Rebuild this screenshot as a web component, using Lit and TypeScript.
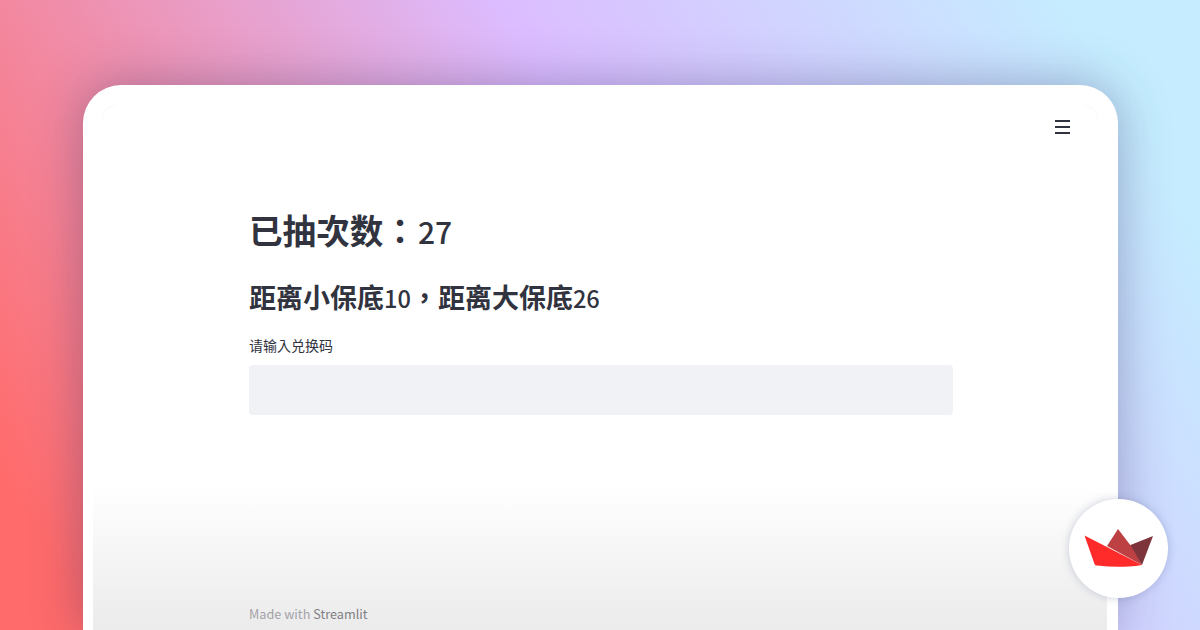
import { LitElement, css, html } from "lit";
import { customElement } from "lit/decorators.js";

@customElement("app-root")
export class AppRoot extends LitElement {
  static styles = css`
    :host {
      display: block;
      width: 1200px;
      height: 630px;
      overflow: hidden;
      position: relative;
      font-family: "Noto Sans CJK TC", "Noto Sans", sans-serif;
      color: #262730;
      background: linear-gradient(60deg, #ff6b6b 6%, #dcbcff 55%, #c5edff 92%);
    }
    .stage {
      height: 100%;
      box-sizing: border-box;
      padding: 85px 82px 0 83px;
    }
    .card {
      height: 100%;
      background: #fff;
      border-radius: 38px 38px 0 0;
      box-shadow: 0 0 50px rgba(40, 40, 90, 0.35);
      padding: 0 11px 0 10px;
      display: flex;
    }
    .frame {
      flex: 1;
      position: relative;
      padding: 0 154px 0 156px;
      background: linear-gradient(180deg, rgba(235, 235, 236, 0) 400px, #ebebec 545px);
      display: flex;
      flex-direction: column;
    }
    .frame::before,
    .frame::after {
      content: "";
      position: absolute;
      top: 20px;
      width: 14px;
      height: 14px;
      border-top: 1px solid #f9f9f9;
    }
    .frame::before {
      left: 9px;
      border-left: 1px solid #f9f9f9;
      border-top-left-radius: 14px;
    }
    .frame::after {
      right: 9px;
      border-right: 1px solid #f9f9f9;
      border-top-right-radius: 14px;
    }
    .menu {
      position: absolute;
      top: 35px;
      right: 37px;
      width: 15px;
      display: flex;
      flex-direction: column;
      gap: 4px;
    }
    .menu span {
      height: 2px;
      background: #31333f;
    }
    h1 {
      margin: 117px 0 0;
      font-size: 33.6px;
      line-height: 56px;
      font-weight: 700;
      color: #31333f;
    }
    h1 .num {
      margin-left: 1px;
      font-size: 30px;
      font-weight: 500;
    }
    h2 {
      margin: 16px 0 0;
      font-size: 27px;
      line-height: 44px;
      font-weight: 700;
      color: #31333f;
    }
    h2 .num {
      font-size: 23.6px;
      font-weight: 500;
    }
    label {
      display: block;
      margin-top: 15px;
      font-size: 14px;
      line-height: 20px;
      color: #31333f;
    }
    .input {
      margin-top: 10px;
      height: 50px;
      background: #f0f2f6;
      border-radius: 4px;
    }
    .foot {
      margin-top: auto;
      padding-bottom: 6px;
      font-size: 12.7px;
      line-height: 20px;
      color: #a3a3a8;
    }
    .foot b {
      font-weight: 400;
      color: #808085;
    }
    .badge {
      position: absolute;
      left: 1069px;
      top: 499px;
      width: 99px;
      height: 99px;
      border-radius: 50%;
      background: #fff;
      box-shadow: 0 0 8px rgba(60, 70, 120, 0.25);
      display: flex;
      align-items: center;
      justify-content: center;
    }
  `;

  render() {
    return html`
      <div class="stage">
        <div class="card">
          <div class="frame">
            <div class="menu"><span></span><span></span><span></span></div>
            <h1>已抽次数：<span class="num">27</span></h1>
            <h2>距离小保底<span class="num">10</span>，距离大保底<span class="num">26</span></h2>
            <label>请输入兑换码</label>
            <div class="input"></div>
            <div class="foot">Made with <b>Streamlit</b></div>
          </div>
        </div>
      </div>
      <div class="badge">
        <svg width="70" height="39" viewBox="0 0 70 39">
          <path d="M44 17 L69 7 L58 36 Z" fill="#7d353b" />
          <path d="M23 17 L34 0 L47 17 L58 36 Z" fill="#bd4043" />
          <path d="M0.5 6.5 L58 36 Q52 37 45 37.5 Q30 38.5 13 36.5 Q11 36.5 10.5 35 Z" fill="#ff2b2b" />
        </svg>
      </div>
    `;
  }
}
